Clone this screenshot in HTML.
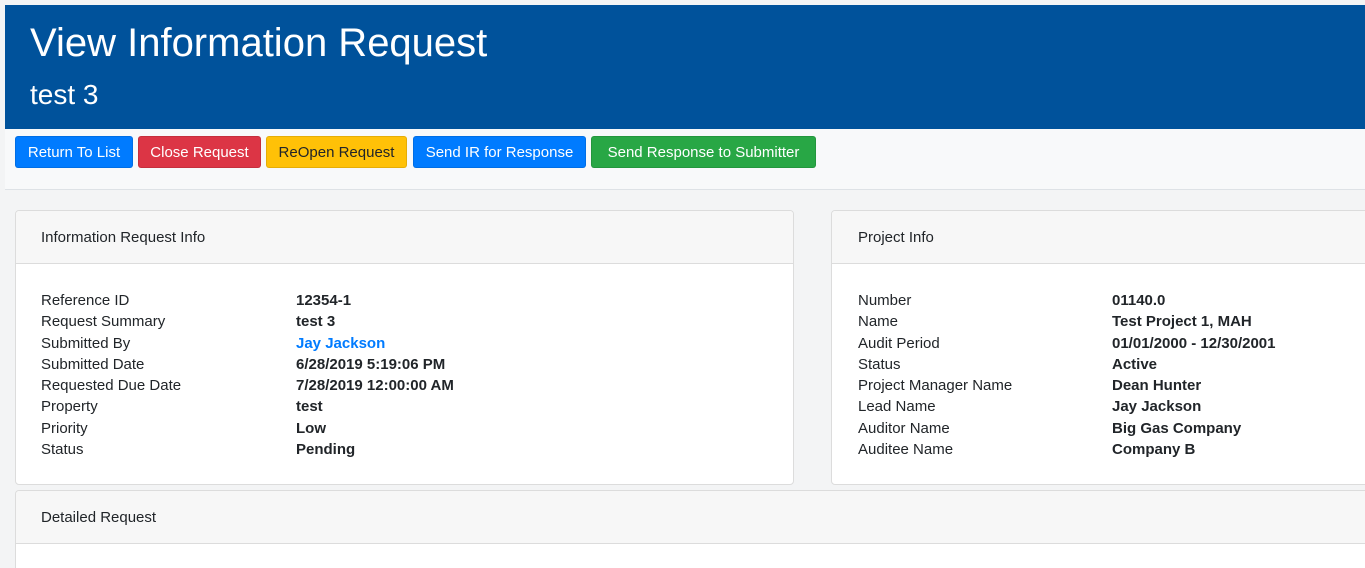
<!DOCTYPE html>
<html style="overflow:hidden;height:568px"><head><style>
body{margin:0;width:1365px;height:568px;overflow:hidden;background:#f3f4f5;font-family:"Liberation Sans",sans-serif;color:#212529;position:relative}
.hdr{position:absolute;left:5px;top:5px;width:1360px;height:124px;background:#00529b;color:#fff}
.hdr h1{position:absolute;left:25px;top:16px;margin:0;font-weight:normal;font-size:40px}
.hdr h2{position:absolute;left:25px;top:74px;margin:0;font-weight:normal;font-size:28px}
.bar{position:absolute;left:5px;top:129px;width:1360px;height:60px;background:#f8f9fa;border-bottom:1px solid #dee2e6}
.btn{position:absolute;top:136px;height:32px;line-height:32px;color:#fff;font-size:15px;text-align:center;border-radius:3px;box-sizing:border-box;border:1px solid rgba(0,0,0,.1)}
.card{position:absolute;background:#fff;border:1px solid #dcdcdc;border-radius:4px;box-sizing:border-box;overflow:hidden}
.ch{height:52px;background:#f7f7f7;border-bottom:1px solid #dcdcdc;font-size:15px;line-height:53px;padding-left:25px}
.row{position:absolute;font-size:15px;line-height:21.3px}
</style></head><body>
<div class="hdr"><h1>View Information Request</h1><h2>test 3</h2></div>
<div class="bar"></div>
<div class="btn" style="left:15px;width:118px;background:#007bff">Return To List</div>
<div class="btn" style="left:138px;width:123px;background:#dc3545">Close Request</div>
<div class="btn" style="left:266px;width:141px;background:#ffc107;color:#212529">ReOpen Request</div>
<div class="btn" style="left:413px;width:173px;background:#007bff">Send IR for Response</div>
<div class="btn" style="left:591px;width:225px;background:#28a745">Send Response to Submitter</div>

<div class="card" style="left:15px;top:210px;width:779px;height:275px">
<div class="ch">Information Request Info</div>
<div class="row" style="left:25px;top:79px">Reference ID<br>Request Summary<br>Submitted By<br>Submitted Date<br>Requested Due Date<br>Property<br>Priority<br>Status</div>
<div class="row" style="left:280px;top:79px;font-weight:bold">12354-1<br>test 3<br><span style="color:#007bff">Jay Jackson</span><br>6/28/2019 5:19:06 PM<br>7/28/2019 12:00:00 AM<br>test<br>Low<br>Pending</div>
</div>
<div class="card" style="left:831px;top:210px;width:545px;height:275px">
<div class="ch" style="padding-left:26px">Project Info</div>
<div class="row" style="left:26px;top:79px">Number<br>Name<br>Audit Period<br>Status<br>Project Manager Name<br>Lead Name<br>Auditor Name<br>Auditee Name</div>
<div class="row" style="left:280px;top:79px;font-weight:bold">01140.0<br>Test Project 1, MAH<br>01/01/2000 - 12/30/2001<br>Active<br>Dean Hunter<br>Jay Jackson<br>Big Gas Company<br>Company B</div>
</div>
<div class="card" style="left:15px;top:490px;width:1361px;height:78px;border-bottom:none;border-radius:4px 4px 0 0">
<div class="ch">Detailed Request</div>
</div>
</body></html>
